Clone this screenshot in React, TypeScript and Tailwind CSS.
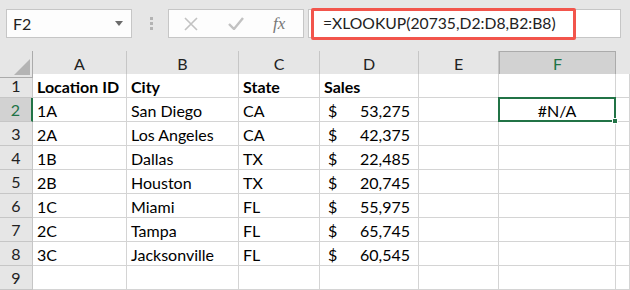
import React from "react";

type Row = {
  id: string;
  city: string;
  state: string;
  sales: string;
};

const rows: Row[] = [
  { id: "1A", city: "San Diego", state: "CA", sales: "53,275" },
  { id: "2A", city: "Los Angeles", state: "CA", sales: "42,375" },
  { id: "1B", city: "Dallas", state: "TX", sales: "22,485" },
  { id: "2B", city: "Houston", state: "TX", sales: "20,745" },
  { id: "1C", city: "Miami", state: "FL", sales: "55,975" },
  { id: "2C", city: "Tampa", state: "FL", sales: "65,745" },
  { id: "3C", city: "Jacksonville", state: "FL", sales: "60,545" },
];

const cols = ["A", "B", "C", "D", "E", "F"];

const gridCols = "grid grid-cols-[33px_94px_112px_81px_99px_80px_117px_1fr]";
const cell = "flex h-[24px] items-center border-b border-r border-[#d4d4d4] bg-white pt-[2px] text-[16px] text-black";

function RowHead({ n, active }: { n: number; active?: boolean }) {
  return (
    <div
      className={`flex h-[24px] items-center justify-center border-b pt-[1px] text-[16px] ${
        active
          ? "border-r-2 border-b-[#c6c6c6] border-r-[#217346] bg-[#d2d2d2] text-[#217346]"
          : "border-r border-[#c6c6c6] bg-[#e6e6e6] text-[#222]"
      }`}
    >
      {n}
    </div>
  );
}

export default function App() {
  return (
    <div className="h-[290px] w-[630px] overflow-hidden bg-[#e6e6e6] font-['Lato',_sans-serif]">
      {/* formula bar */}
      <div className="relative flex h-[51px] items-start pt-[9px]">
        <div className="ml-[6px] flex h-[29px] w-[126px] items-center justify-between border border-[#c6c6c6] bg-[#fdfdfd] pl-[6px] pr-[8px] text-[16px] text-[#222]">
          <span>F2</span>
          <svg width="8" height="5" viewBox="0 0 8 5">
            <path d="M0 0h8L4 5z" fill="#6b6b6b" />
          </svg>
        </div>
        <div className="ml-[18px] mt-[8px] flex flex-col gap-[2px]">
          <span className="h-[3px] w-[3px] bg-[#b3b3b3]" />
          <span className="h-[3px] w-[3px] bg-[#b3b3b3]" />
          <span className="h-[3px] w-[3px] bg-[#b3b3b3]" />
        </div>
        <div className="ml-[15px] flex h-[29px] w-[136px] items-center border border-[#c6c6c6] bg-[#fdfdfd] pl-[15px]">
          <svg width="14" height="14" viewBox="0 0 14 14">
            <path d="M1 1l12 12M13 1L1 13" stroke="#c2c2c2" strokeWidth="1.6" />
          </svg>
          <svg className="ml-[30px]" width="16" height="13" viewBox="0 0 16 13">
            <path d="M1 7l5 5L15 1" stroke="#c2c2c2" strokeWidth="2.4" fill="none" />
          </svg>
          <span className="ml-[29px] font-['Liberation_Serif',_serif] text-[17px] italic text-[#777]">
            fx
          </span>
        </div>
        <div className="ml-[4px] flex h-[29px] w-[313px] items-center border border-[#c6c6c6] bg-white pl-[14px] text-[15.7px] text-[#222]">
          =XLOOKUP(20735,D2:D8,B2:B8)
        </div>
        <div className="pointer-events-none absolute left-[311px] top-[8px] h-[32px] w-[265px] rounded-[2px] border-[3px] border-[#f2554c]" />
      </div>

      {/* column headers */}
      <div className={`${gridCols} h-[23px]`}>
        <div className="relative border-b border-r border-[#ababab] bg-[#e6e6e6]">
          <svg className="absolute bottom-[2px] right-[2px]" width="16" height="16" viewBox="0 0 16 16">
            <path d="M16 0V16H0z" fill="#b4b4b4" />
          </svg>
        </div>
        {cols.map((c) => (
          <div
            key={c}
            className={`flex items-center justify-center text-[16px] ${
              c === "F"
                ? "border-x border-t border-b-2 border-[#ababab] border-b-[#217346] bg-[#d2d2d2] text-[#217346]"
                : "border-b border-r border-b-[#ababab] border-r-[#c6c6c6] bg-[#e6e6e6] text-[#222]"
            }`}
          >
            {c}
          </div>
        ))}
        <div className="border-b border-[#ababab] bg-[#e6e6e6]" />
      </div>

      {/* rows */}
      <div className={gridCols}>
        <RowHead n={1} />
        <div className={`${cell} pl-[4px] font-bold`}>Location ID</div>
        <div className={`${cell} pl-[4px] font-bold`}>City</div>
        <div className={`${cell} pl-[4px] font-bold`}>State</div>
        <div className={`${cell} pl-[4px] font-bold`}>Sales</div>
        <div className={cell} />
        <div className={cell} />
        <div className={cell} />

        {rows.map((r, i) => (
          <React.Fragment key={r.id}>
            <RowHead n={i + 2} active={i === 0} />
            <div className={`${cell} pl-[4px]`}>{r.id}</div>
            <div className={`${cell} pl-[4px]`}>{r.city}</div>
            <div className={`${cell} pl-[4px]`}>{r.state}</div>
            <div className={`${cell} justify-between pl-[8px] pr-[8px]`}>
              <span>$</span>
              <span>{r.sales}</span>
            </div>
            <div className={cell} />
            {i === 0 ? (
              <div className={`${cell} relative justify-center`}>
                <span>#N/A</span>
                <div className="pointer-events-none absolute -left-px -top-px h-[25px] w-[118px] border-2 border-[#217346]" />
                <div className="absolute -bottom-[3px] -right-[3px] h-[6px] w-[6px] border border-white bg-[#217346]" />
              </div>
            ) : (
              <div className={cell} />
            )}
            <div className={cell} />
          </React.Fragment>
        ))}

        <RowHead n={9} />
        <div className={cell} />
        <div className={cell} />
        <div className={cell} />
        <div className={cell} />
        <div className={cell} />
        <div className={cell} />
        <div className={cell} />
      </div>
    </div>
  );
}
